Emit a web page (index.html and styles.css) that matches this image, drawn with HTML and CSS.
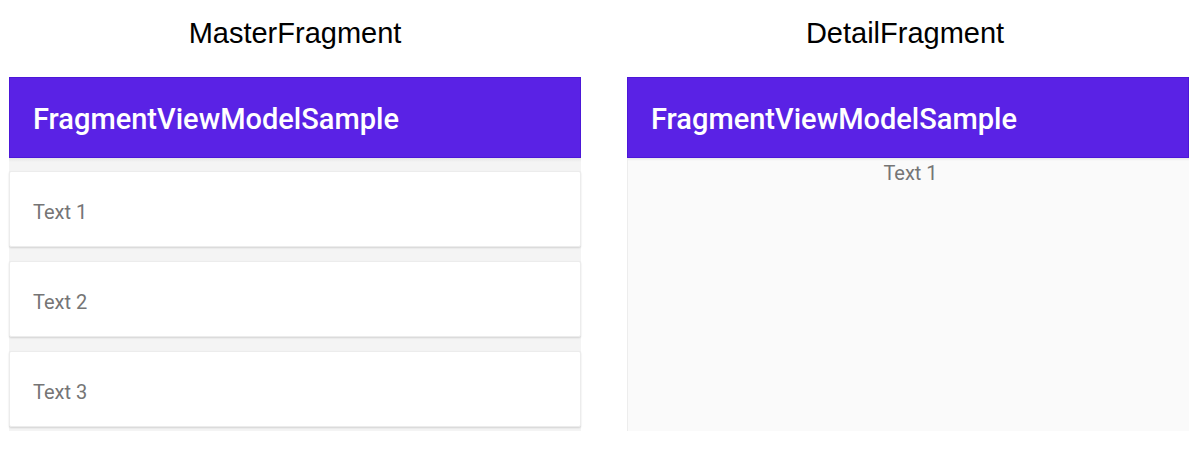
FILE: index.html
```html
<!DOCTYPE html>
<html>
<head>
<meta charset="utf-8">
<link rel="stylesheet" href="styles.css">
</head>
<body>
<div class="page">
  <section class="column master">
    <h2 class="caption">MasterFragment</h2>
    <div class="phone">
      <header class="appbar">FragmentViewModelSample</header>
      <div class="list">
        <div class="card">Text 1</div>
        <div class="card">Text 2</div>
        <div class="card">Text 3</div>
      </div>
    </div>
  </section>
  <section class="column detail">
    <h2 class="caption">DetailFragment</h2>
    <div class="phone">
      <header class="appbar">FragmentViewModelSample</header>
      <div class="detail-body">
        <div class="detail-text">Text 1</div>
      </div>
    </div>
  </section>
</div>
</body>
</html>
```
FILE: styles.css
```css
html, body {
  margin: 0;
  padding: 0;
  background: #ffffff;
}

.page {
  display: flex;
  gap: 46px;
  padding: 0 11px 0 9px;
  height: 451px;
  box-sizing: border-box;
}

.column {
  display: flex;
  flex-direction: column;
}

.master { width: 572px; }
.detail { width: 562px; }

.caption {
  margin: 0;
  height: 77px;
  padding-top: 15px;
  box-sizing: border-box;
  text-align: center;
  font-family: "Liberation Sans", Arial, sans-serif;
  font-weight: normal;
  font-size: 29px;
  line-height: 36px;
  color: #000;
}

.detail .caption { padding-right: 6px; }

.phone {
  display: flex;
  flex-direction: column;
  height: 354px;
}

.appbar {
  height: 81px;
  box-sizing: border-box;
  background: #5a22e5;
  border: 1px solid #4c17d8;
  color: #ffffff;
  font-family: Roboto, "Noto Sans", sans-serif;
  font-weight: 500;
  font-size: 29px;
  line-height: 79px;
  padding-top: 2px;
  padding-left: 23px;
  flex-shrink: 0;
}

.list {
  flex: 1;
  background: #f4f4f4;
  background-image: linear-gradient(#e6e6e6, #f4f4f4 4px);
  display: flex;
  flex-direction: column;
  gap: 14px;
  padding-top: 13px;
}

.card {
  height: 76px;
  box-sizing: border-box;
  background: #ffffff;
  border: 1px solid #ececec;
  border-radius: 2px;
  box-shadow: 0 1px 2px rgba(0, 0, 0, 0.14);
  padding-left: 23px;
  padding-top: 3px;
  font-family: Roboto, "Noto Sans", sans-serif;
  font-size: 20px;
  line-height: 74px;
  color: #757575;
}

.detail-body {
  flex: 1;
  background: #fafafa;
  border-left: 1px solid #ededed;
  background-image: linear-gradient(#e8e8e8, #fafafa 3px);
}

.detail-text {
  text-align: center;
  padding-top: 3px;
  padding-left: 4px;
  font-family: Roboto, "Noto Sans", sans-serif;
  font-size: 20px;
  line-height: 24px;
  color: #757575;
}
```
